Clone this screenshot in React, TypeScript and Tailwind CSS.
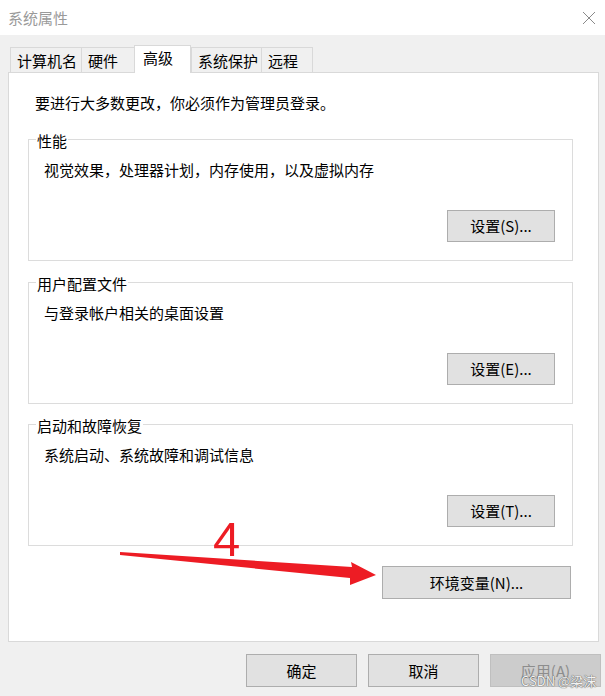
const tabs = [
  { label: "计算机名", w: "w-[71px]" },
  { label: "硬件", w: "w-[53px]" },
  { label: "高级", w: "w-[57px]", active: true },
  { label: "系统保护", w: "w-[70px]" },
  { label: "远程", w: "w-[52px]" },
];

const groups = [
  { title: "性能", text: "视觉效果，处理器计划，内存使用，以及虚拟内存", button: "设置(S)...", mt: "mt-[16px]" },
  { title: "用户配置文件", text: "与登录帐户相关的桌面设置", button: "设置(E)...", mt: "mt-[11px]" },
  { title: "启动和故障恢复", text: "系统启动、系统故障和调试信息", button: "设置(T)...", mt: "mt-[10px]" },
];

const Button = ({ children, className = "" }: { children: React.ReactNode; className?: string }) => (
  <div
    className={`h-[32px] flex items-center justify-center border border-[#adadad] bg-[#e1e1e1] text-[15px] text-black ${className}`}
  >
    {children}
  </div>
);

const App = () => {
  return (
    <div className="relative w-[605px] h-[696px] bg-[#f0f0f0] flex flex-col overflow-hidden font-['Noto_Sans_CJK_SC',sans-serif] text-[15px] leading-[20px] text-black">
      <div className="h-[35px] bg-white flex items-center justify-between pl-[8px] pr-[9px]">
        <span className="text-[#9a9a9a]">系统属性</span>
        <svg width="14" height="14" viewBox="0 0 14 14" className="text-[#8a8a8a]">
          <path d="M1 1 L13 13 M13 1 L1 13" stroke="currentColor" strokeWidth="1" fill="none" />
        </svg>
      </div>

      <div className="mt-[10px] ml-[10px] flex items-end h-[27px]">
        {tabs.map((t, i) =>
          t.active ? (
            <div
              key={t.label}
              className={`relative z-10 ${t.w} h-[28px] -mb-px bg-white border border-b-0 border-[#d9d9d9] pl-[8px] pt-[2px]`}
            >
              {t.label}
            </div>
          ) : (
            <div
              key={t.label}
              className={`${t.w} h-[25px] border-t border-l border-[#d9d9d9] ${i === tabs.length - 1 ? "border-r" : ""} pl-[6px] pt-[3px]`}
            >
              {t.label}
            </div>
          )
        )}
      </div>

      <div className="ml-[8px] w-[591px] h-[570px] bg-white border border-[#d9d9d9] flex flex-col">
        <div className="pt-[20px] pl-[26px]">要进行大多数更改，你必须作为管理员登录。</div>
        <div className="ml-[19px] w-[545px] flex flex-col">
          {groups.map((g) => (
            <fieldset key={g.title} className={`${g.mt} border border-[#dcdcdc] pl-[15px] pr-[17px] pb-[18px] flex flex-col`}>
              <legend className="-ml-[8px] px-[1px] pt-[4px] leading-[16px]">{g.title}</legend>
              <div className="mt-[11px]">{g.text}</div>
              <Button className="mt-[30px] self-end w-[108px]">{g.button}</Button>
            </fieldset>
          ))}
          <Button className="mt-[20px] self-end mr-[2px] w-[189px] h-[33px]">环境变量(N)...</Button>
        </div>
      </div>

      <div className="mt-[12px] flex justify-end gap-[11px] pr-[4px]">
        <Button className="w-[111px] h-[33px]">确定</Button>
        <Button className="w-[111px] h-[33px]">取消</Button>
        <div className="w-[111px] h-[33px] flex items-center justify-center border border-[#bfbfbf] bg-[#cccccc] text-[#8d8d8d]">
          应用(A)
        </div>
      </div>

      <svg className="absolute inset-0 pointer-events-none" width="605" height="696" viewBox="0 0 605 696">
        <polygon
          points="120,552 352,567 351,562 376,575 350,585 350,578 120,555"
          fill="#ed1c24"
        />
      </svg>
      <div className="absolute left-[213px] top-[511px] font-['Liberation_Sans',sans-serif] text-[49px] leading-[56px] text-[#ed1c24]">
        4
      </div>
      <div className="absolute left-[521px] top-[673px] text-[13px] leading-[16px] text-[#f2f2f2] [text-shadow:0_0_1px_#555,0_0_1px_#555]">
        CSDN @梁沫
      </div>
    </div>
  );
};

export default App;
